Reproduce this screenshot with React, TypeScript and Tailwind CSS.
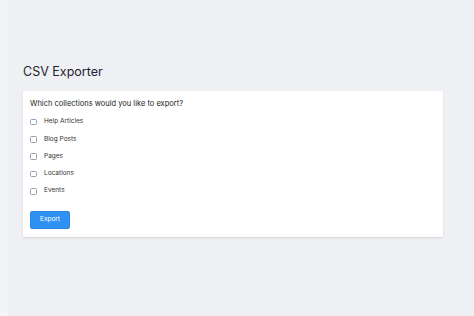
const items = ["Help Articles", "Blog Posts", "Pages", "Locations", "Events"]

export default function App() {
  return (
    <div className="flex h-[316px] w-[474px] bg-[#eef0f4] font-['Inter',sans-serif] text-[#1f2933]">
      <div className="w-[8px] bg-[#f3f4f7]" />
      <div className="flex-1 pl-[15px] pr-[31px] pt-[62px]">
        <h1 className="text-[12.5px] leading-[20px] text-[#1f2430]">CSV Exporter</h1>
        <div className="mt-[9px] rounded-[2px] bg-white px-[7px] pt-[7px] pb-[8px] shadow-[0_1px_2px_rgba(0,0,0,0.12)]">
          <p className="text-[7.5px] leading-[12px] text-[#222]">Which collections would you like to export?</p>
          <div className="mt-[3.5px] flex flex-col">
            {items.map((it) => (
              <label key={it} className="flex h-[17.3px] items-center">
                <span className="h-[6.5px] w-[6.5px] rounded-[1.5px] border border-[#9aa0a8] bg-white" />
                <span className="ml-[7.5px] text-[6.5px] text-[#333]">{it}</span>
              </label>
            ))}
          </div>
          <button className="mt-[11px] h-[18px] w-[40px] rounded-[2px] border border-[#2a86e6] bg-[#2f92f3] text-[6.5px] text-white">
            Export
          </button>
        </div>
      </div>
    </div>
  )
}
